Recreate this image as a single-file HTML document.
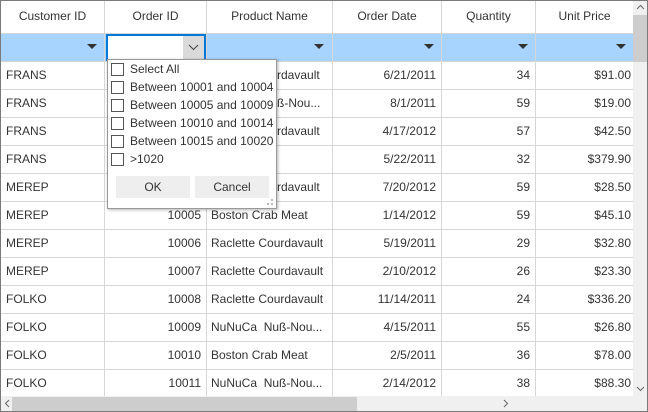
<!DOCTYPE html>
<html><head><meta charset="utf-8"><style>
*{margin:0;padding:0;box-sizing:border-box}
body{width:648px;height:412px;overflow:hidden;background:#fff;font-family:"Liberation Sans",sans-serif;font-size:12px;color:#333;position:relative}
.frame{position:absolute;left:0;top:0;width:648px;height:412px;border:1px solid #7a7a7a}
.vl{position:absolute;top:1px;width:1px;height:395px;background:#d6d6d6}
.hl{position:absolute;left:1px;width:632px;height:1px;background:#d6d6d6}
.hdr{position:absolute;top:0;height:33px;line-height:33px;text-align:center;color:#333}
.filter{position:absolute;left:1px;top:34px;width:632px;height:27px;background:#a6d3ff}
.tri{position:absolute;top:44px;width:0;height:0;border-left:5px solid transparent;border-right:5px solid transparent;border-top:5px solid #333}
.c{position:absolute;height:28px;line-height:28px;white-space:nowrap;overflow:hidden}
.r{text-align:right}
.vs{position:absolute;left:633px;top:1px;width:14px;height:395px;background:#f0f0f0}
.hs{position:absolute;left:1px;top:396px;width:646px;height:15px;background:#f0f0f0}
.pop{position:absolute;left:107px;top:59px;width:170px;height:150px;background:#fff;border:1px solid #999;box-shadow:1px 1px 3px rgba(0,0,0,.3)}
.cb{position:absolute;left:3px;width:13px;height:13px;border:1px solid #555;background:#fff}
.lb{position:absolute;left:22px;line-height:18px;white-space:nowrap}
.btn{position:absolute;top:116px;height:22px;width:74px;background:#eee;text-align:center;line-height:22px}
</style></head><body>
<div class="frame"></div>
<div class="filter"></div>
<!-- vertical lines -->
<div class="vl" style="left:104px"></div>
<div class="vl" style="left:206px"></div>
<div class="vl" style="left:332px"></div>
<div class="vl" style="left:441px"></div>
<div class="vl" style="left:535px"></div>
<!-- horizontal lines -->
<div class="hl" style="top:33px"></div>
<div class="hl" style="top:61px"></div>
<div class="hl" style="top:89px"></div>
<div class="hl" style="top:117px"></div>
<div class="hl" style="top:145px"></div>
<div class="hl" style="top:173px"></div>
<div class="hl" style="top:201px"></div>
<div class="hl" style="top:229px"></div>
<div class="hl" style="top:257px"></div>
<div class="hl" style="top:285px"></div>
<div class="hl" style="top:313px"></div>
<div class="hl" style="top:341px"></div>
<div class="hl" style="top:369px"></div>
<!-- headers -->
<div class="hdr" style="left:1px;width:103px">Customer ID</div>
<div class="hdr" style="left:105px;width:101px">Order ID</div>
<div class="hdr" style="left:207px;width:125px">Product Name</div>
<div class="hdr" style="left:333px;width:108px">Order Date</div>
<div class="hdr" style="left:442px;width:93px">Quantity</div>
<div class="hdr" style="left:536px;width:97px">Unit Price</div>
<!-- filter triangles -->
<div class="tri" style="left:87px"></div>
<div class="tri" style="left:314px"></div>
<div class="tri" style="left:424px"></div>
<div class="tri" style="left:518px"></div>
<div class="tri" style="left:616px"></div>
<!-- editor -->
<div style="position:absolute;left:106px;top:34px;width:100px;height:27px;border:2px solid #0078d7;background:#fff"></div>
<div style="position:absolute;left:183px;top:36px;width:21px;height:23px;background:#dadada"></div>
<svg style="position:absolute;left:188px;top:43px" width="11" height="8"><path d="M1 2 L5.5 6.5 L10 2" fill="none" stroke="#444" stroke-width="1"/></svg>
<!-- rows -->
<div id="rows"></div>
<div class="c" style="left:6px;top:61px">FRANS</div>
<div class="c" style="left:6px;top:89px">FRANS</div>
<div class="c" style="left:6px;top:117px">FRANS</div>
<div class="c" style="left:6px;top:145px">FRANS</div>
<div class="c" style="left:6px;top:173px">MEREP</div>
<div class="c" style="left:6px;top:201px">MEREP</div>
<div class="c" style="left:6px;top:229px">MEREP</div>
<div class="c" style="left:6px;top:257px">MEREP</div>
<div class="c" style="left:6px;top:285px">FOLKO</div>
<div class="c" style="left:6px;top:313px">FOLKO</div>
<div class="c" style="left:6px;top:341px">FOLKO</div>
<div class="c" style="left:6px;top:369px">FOLKO</div>

<div class="c r" style="left:105px;width:96px;top:201px">10005</div>
<div class="c r" style="left:105px;width:96px;top:229px">10006</div>
<div class="c r" style="left:105px;width:96px;top:257px">10007</div>
<div class="c r" style="left:105px;width:96px;top:285px">10008</div>
<div class="c r" style="left:105px;width:96px;top:313px">10009</div>
<div class="c r" style="left:105px;width:96px;top:341px">10010</div>
<div class="c r" style="left:105px;width:96px;top:369px">10011</div>

<div class="c" style="left:277px;width:54px;top:61px">rdavault</div>
<div class="c" style="left:277px;width:54px;top:89px">ß-Nou...</div>
<div class="c" style="left:277px;width:54px;top:117px">rdavault</div>
<div class="c" style="left:277px;width:54px;top:173px">rdavault</div>
<div class="c" style="left:211px;width:120px;top:201px">Boston Crab Meat</div>
<div class="c" style="left:211px;width:120px;top:229px">Raclette Courdavault</div>
<div class="c" style="left:211px;width:120px;top:257px">Raclette Courdavault</div>
<div class="c" style="left:211px;width:120px;top:285px">Raclette Courdavault</div>
<div class="c" style="left:211px;width:120px;top:313px">NuNuCa &nbsp;Nuß-Nou...</div>
<div class="c" style="left:211px;width:120px;top:341px">Boston Crab Meat</div>
<div class="c" style="left:211px;width:120px;top:369px">NuNuCa &nbsp;Nuß-Nou...</div>

<div class="c r" style="left:333px;width:103px;top:61px">6/21/2011</div>
<div class="c r" style="left:333px;width:103px;top:89px">8/1/2011</div>
<div class="c r" style="left:333px;width:103px;top:117px">4/17/2012</div>
<div class="c r" style="left:333px;width:103px;top:145px">5/22/2011</div>
<div class="c r" style="left:333px;width:103px;top:173px">7/20/2012</div>
<div class="c r" style="left:333px;width:103px;top:201px">1/14/2012</div>
<div class="c r" style="left:333px;width:103px;top:229px">5/19/2011</div>
<div class="c r" style="left:333px;width:103px;top:257px">2/10/2012</div>
<div class="c r" style="left:333px;width:103px;top:285px">11/14/2011</div>
<div class="c r" style="left:333px;width:103px;top:313px">4/15/2011</div>
<div class="c r" style="left:333px;width:103px;top:341px">2/5/2011</div>
<div class="c r" style="left:333px;width:103px;top:369px">2/14/2012</div>

<div class="c r" style="left:442px;width:88px;top:61px">34</div>
<div class="c r" style="left:442px;width:88px;top:89px">59</div>
<div class="c r" style="left:442px;width:88px;top:117px">57</div>
<div class="c r" style="left:442px;width:88px;top:145px">32</div>
<div class="c r" style="left:442px;width:88px;top:173px">59</div>
<div class="c r" style="left:442px;width:88px;top:201px">59</div>
<div class="c r" style="left:442px;width:88px;top:229px">29</div>
<div class="c r" style="left:442px;width:88px;top:257px">26</div>
<div class="c r" style="left:442px;width:88px;top:285px">24</div>
<div class="c r" style="left:442px;width:88px;top:313px">55</div>
<div class="c r" style="left:442px;width:88px;top:341px">36</div>
<div class="c r" style="left:442px;width:88px;top:369px">38</div>

<div class="c r" style="left:536px;width:95px;top:61px">$91.00</div>
<div class="c r" style="left:536px;width:95px;top:89px">$19.00</div>
<div class="c r" style="left:536px;width:95px;top:117px">$42.50</div>
<div class="c r" style="left:536px;width:95px;top:145px">$379.90</div>
<div class="c r" style="left:536px;width:95px;top:173px">$28.50</div>
<div class="c r" style="left:536px;width:95px;top:201px">$45.10</div>
<div class="c r" style="left:536px;width:95px;top:229px">$32.80</div>
<div class="c r" style="left:536px;width:95px;top:257px">$23.30</div>
<div class="c r" style="left:536px;width:95px;top:285px">$336.20</div>
<div class="c r" style="left:536px;width:95px;top:313px">$26.80</div>
<div class="c r" style="left:536px;width:95px;top:341px">$78.00</div>
<div class="c r" style="left:536px;width:95px;top:369px">$88.30</div>

<!-- scrollbars -->
<div class="vs"></div>
<div style="position:absolute;left:633px;top:15px;width:14px;height:47px;background:#cdcdcd"></div>
<svg style="position:absolute;left:636px;top:4px" width="9" height="6"><path d="M1 5 L4.5 1.5 L8 5" fill="none" stroke="#666"/></svg>
<svg style="position:absolute;left:636px;top:386px" width="9" height="6"><path d="M1 1 L4.5 4.5 L8 1" fill="none" stroke="#666"/></svg>
<div class="hs"></div>
<div style="position:absolute;left:12px;top:397px;width:345px;height:14px;background:#cdcdcd"></div>
<svg style="position:absolute;left:4px;top:399px" width="6" height="9"><path d="M5 1 L1.5 4.5 L5 8" fill="none" stroke="#666"/></svg>
<svg style="position:absolute;left:503px;top:399px" width="6" height="9"><path d="M1 1 L4.5 4.5 L1 8" fill="none" stroke="#666"/></svg>

<!-- popup -->
<div class="pop">
<div class="cb" style="top:3px"></div><div class="lb" style="top:0">Select All</div>
<div class="cb" style="top:21px"></div><div class="lb" style="top:18px">Between 10001 and 10004</div>
<div class="cb" style="top:39px"></div><div class="lb" style="top:36px">Between 10005 and 10009</div>
<div class="cb" style="top:57px"></div><div class="lb" style="top:54px">Between 10010 and 10014</div>
<div class="cb" style="top:75px"></div><div class="lb" style="top:72px">Between 10015 and 10020</div>
<div class="cb" style="top:93px"></div><div class="lb" style="top:90px">&gt;1020</div>
<div class="btn" style="left:8px">OK</div>
<div class="btn" style="left:87px">Cancel</div>
<svg style="position:absolute;left:158px;top:138px" width="8" height="8"><g fill="#bbb"><rect x="5" y="1" width="2" height="2"/><rect x="1" y="5" width="2" height="2"/><rect x="5" y="5" width="2" height="2"/></g></svg>
</div>
</body></html>
